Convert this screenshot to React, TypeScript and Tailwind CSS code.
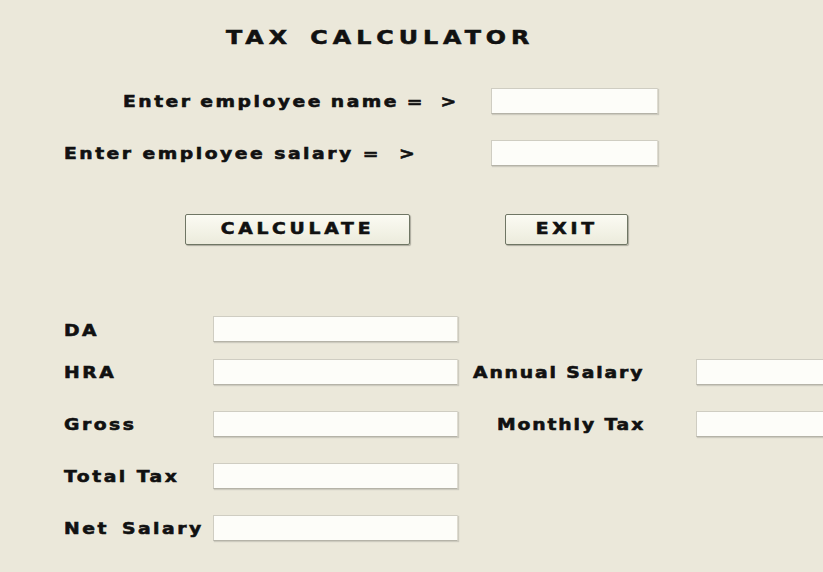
import React from "react";

const font = { fontFamily: '"DejaVu Sans", "Liberation Sans", sans-serif' };

function Field({ className = "" }: { className?: string }) {
  return (
    <div
      className={
        "shrink-0 h-[26px] bg-[#fdfdf9] border border-t-[#cfcdc2] border-l-[#cfcdc2] border-r-[#dedbd0] border-b-[#b5b3a8] shadow-[1px_1px_1px_rgba(150,150,140,0.35)] " +
        className
      }
    />
  );
}

function Wide({ children, className = "" }: { children: React.ReactNode; className?: string }) {
  return (
    <span
      className={
        "inline-block origin-left scale-x-[1.25] whitespace-pre [-webkit-text-stroke:0.55px_#111] " +
        className
      }
    >
      {children}
    </span>
  );
}

function Btn({ label, className = "" }: { label: string; className?: string }) {
  return (
    <button
      className={
        "h-[31px] rounded-[2px] border border-[#6f7664] bg-gradient-to-b from-[#fbfbf3] to-[#ecebdc] shadow-[1px_1px_1px_rgba(80,80,70,0.4)] text-[15px] font-bold text-[#111] flex items-center justify-center " +
        className
      }
    >
      <span className="inline-block origin-center scale-x-[1.25] tracking-[3px] [-webkit-text-stroke:0.55px_#111]">
        {label}
      </span>
    </button>
  );
}

export default function App() {
  return (
    <div
      className="w-[823px] h-[572px] overflow-hidden bg-[#ebe8da] text-[#111] font-bold"
      style={font}
    >
      <div className="pt-[25px] pl-[226px] text-[19px] leading-[24px]">
        <Wide className="tracking-[4px] [word-spacing:4px] [-webkit-text-stroke:0.7px_#111]">TAX CALCULATOR</Wide>
      </div>

      <div className="mt-[39px] flex items-center h-[26px]">
        <div className="pl-[123px] pt-[3px] w-[491px] shrink-0 text-[15px]">
          <Wide className="tracking-[2px] [word-spacing:-1px]">Enter employee name =  &gt;</Wide>
        </div>
        <Field className="w-[167px]" />
      </div>

      <div className="mt-[26px] flex items-center h-[26px]">
        <div className="pl-[64px] pt-[3px] w-[491px] shrink-0 text-[15px]">
          <Wide className="tracking-[2px]">Enter employee salary =  &gt;</Wide>
        </div>
        <Field className="w-[167px]" />
      </div>

      <div className="mt-[48px] flex">
        <Btn label="CALCULATE" className="ml-[185px] w-[225px]" />
        <Btn label="EXIT" className="ml-[95px] w-[123px]" />
      </div>

      <div className="mt-[71px] pl-[64px] flex flex-col text-[15px]">
        <div className="flex items-center h-[26px]">
          <div className="w-[149px] shrink-0 pt-[4px]">
            <Wide className="tracking-[2px]">DA</Wide>
          </div>
          <Field className="w-[245px]" />
        </div>
        <div className="mt-[17px] flex items-center h-[26px]">
          <div className="w-[149px] shrink-0 pt-[3px]">
            <Wide className="tracking-[2px]">HRA</Wide>
          </div>
          <Field className="w-[245px]" />
          <div className="w-[238px] shrink-0 pl-[15px] pt-[3px]">
            <Wide className="tracking-[1.5px]">Annual Salary</Wide>
          </div>
          <Field className="w-[167px]" />
        </div>
        <div className="mt-[26px] flex items-center h-[26px]">
          <div className="w-[149px] shrink-0 pt-[3px]">
            <Wide className="tracking-[2px]">Gross</Wide>
          </div>
          <Field className="w-[245px]" />
          <div className="w-[238px] shrink-0 pl-[39px] pt-[3px]">
            <Wide className="tracking-[1.5px]">Monthly Tax</Wide>
          </div>
          <Field className="w-[167px]" />
        </div>
        <div className="mt-[26px] flex items-center h-[26px]">
          <div className="w-[149px] shrink-0 pt-[3px]">
            <Wide className="tracking-[2px]">Total Tax</Wide>
          </div>
          <Field className="w-[245px]" />
        </div>
        <div className="mt-[26px] flex items-center h-[26px]">
          <div className="w-[149px] shrink-0 pt-[3px]">
            <Wide className="tracking-[2px] [word-spacing:-2px]">Net  Salary</Wide>
          </div>
          <Field className="w-[245px]" />
        </div>
      </div>
    </div>
  );
}
